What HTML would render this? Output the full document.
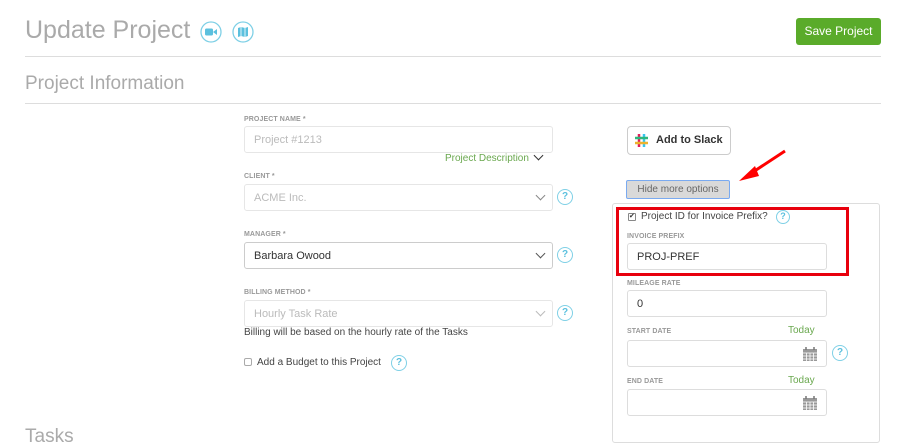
<!DOCTYPE html>
<html><head><style>
*{box-sizing:border-box;margin:0;padding:0}
body{width:920px;height:432px;background:#fff;font-family:"Liberation Sans",sans-serif;position:relative;overflow:hidden;color:#555}
.a{position:absolute}
.lbl{position:absolute;font-size:7px;font-weight:bold;color:#999;letter-spacing:.1px}
.in{position:absolute;border:1px solid #e6e6e6;border-radius:3px;background:#fff;font-size:11px;padding-left:9px;display:flex;align-items:center;color:#bbb}
.dk{border-color:#ccc;color:#333}
.q{position:absolute;width:16px;height:16px;border:1.5px solid #7fd0e6;border-radius:50%;color:#5bc0de;font-size:10px;font-weight:bold;text-align:center;line-height:13px}
.chev{position:absolute;right:8px;top:7px;width:7px;height:7px;border-right:1.5px solid #888;border-bottom:1.5px solid #888;transform:rotate(45deg)}
.green{color:#6aa84f;font-size:10px}
.cal{position:absolute;right:8px;top:5px}
</style></head><body>
<div class="a" style="left:25px;top:16px;font-size:25px;color:#aaa">Update Project</div>
<svg class="a" style="left:200px;top:21px" width="22" height="22"><circle cx="11" cy="11" r="10" fill="none" stroke="#7fd0e6" stroke-width="1.3"/><rect x="5" y="7.5" width="8" height="7" rx="1.5" fill="#5bc0de"/><path d="M13 11 L17 8 V14Z" fill="#5bc0de"/></svg>
<svg class="a" style="left:232px;top:21px" width="22" height="22"><circle cx="11" cy="11" r="10" fill="none" stroke="#7fd0e6" stroke-width="1.3"/><path d="M6 7 L9 6 L13 7 L16 6 V15 L13 16 L9 15 L6 16Z" fill="#5bc0de"/><path d="M9 6V15M13 7V16" stroke="#fff" stroke-width="0.8"/></svg>
<div class="a" style="left:796px;top:18px;width:85px;height:27px;background:#5aab2a;border-radius:3px;color:#fff;font-size:12px;text-align:center;line-height:27px">Save Project</div>
<div class="a" style="left:25px;top:56px;width:856px;height:1px;background:#ddd"></div>
<div class="a" style="left:25px;top:73px;font-size:19px;color:#aaa">Project Information</div>
<div class="a" style="left:25px;top:103px;width:856px;height:1px;background:#ddd"></div>

<div class="lbl" style="left:244px;top:116px">PROJECT NAME *</div>
<div class="in" style="left:244px;top:126px;width:309px;height:27px">Project #1213</div>
<div class="a green" style="left:445px;top:153px">Project Description</div>
<div class="chev" style="left:535px;top:152px;right:auto;border-color:#333"></div>

<div class="lbl" style="left:244px;top:173px">CLIENT *</div>
<div class="in" style="left:244px;top:184px;width:309px;height:27px">ACME Inc.<div class="chev"></div></div>
<div class="q" style="left:557px;top:189px">?</div>

<div class="lbl" style="left:244px;top:231px">MANAGER *</div>
<div class="in dk" style="left:244px;top:242px;width:309px;height:27px">Barbara Owood<div class="chev" style="border-color:#555"></div></div>
<div class="q" style="left:557px;top:247px">?</div>

<div class="lbl" style="left:244px;top:289px">BILLING METHOD *</div>
<div class="in" style="left:244px;top:300px;width:309px;height:27px">Hourly Task Rate<div class="chev" style="border-color:#bbb"></div></div>
<div class="q" style="left:557px;top:305px">?</div>
<div class="a" style="left:244px;top:327px;font-size:10px;color:#444">Billing will be based on the hourly rate of the Tasks</div>
<div class="a" style="left:244px;top:358px;width:8px;height:8px;border:1px solid #aaa;border-radius:2px"></div>
<div class="a" style="left:257px;top:357px;font-size:10px;color:#444">Add a Budget to this Project</div>
<div class="q" style="left:391px;top:355px">?</div>

<div class="a" style="left:627px;top:126px;width:104px;height:29px;border:1px solid #ccc;border-radius:4px;font-size:11px;font-weight:bold;color:#333;line-height:27px;padding-left:28px">Add to Slack</div>
<svg class="a" style="left:634px;top:133px" width="15" height="15"><path d="M5 1V14" stroke="#e01e5a" stroke-width="2.5"/><path d="M10 1V14" stroke="#36c5f0" stroke-width="2.5"/><path d="M1 5H14" stroke="#2eb67d" stroke-width="2.5"/><path d="M1 10H14" stroke="#ecb22e" stroke-width="2.5"/></svg>

<svg class="a" style="left:735px;top:146px" width="55" height="40"><path d="M50 5 L12 30" stroke="#f00" stroke-width="3"/><path d="M4 35 L20 20 L24 30Z" fill="#f00"/></svg>
<div class="a" style="left:626px;top:180px;width:104px;height:19px;background:#d9d9d9;border:1px solid #7aaaf0;border-radius:2px;font-size:10px;color:#666;text-align:center;line-height:17px">Hide more options</div>

<div class="a" style="left:612px;top:203px;width:268px;height:240px;border:1px solid #ddd;border-radius:3px"></div>
<div class="a" style="left:616px;top:207px;width:233px;height:69px;border:3px solid #e8000d"></div>
<div class="a" style="left:628px;top:213px;width:8px;height:8px;border:1px solid #888;border-radius:1px;font-size:7px;line-height:6px;color:#333">✔</div>
<div class="a" style="left:641px;top:211px;font-size:10px;color:#444">Project ID for Invoice Prefix?</div>
<div class="q" style="left:776px;top:210px;width:14px;height:14px;line-height:11px;font-size:9px">?</div>
<div class="lbl" style="left:627px;top:233px">INVOICE PREFIX</div>
<div class="in dk" style="left:627px;top:243px;width:200px;height:27px;border-color:#ddd">PROJ-PREF</div>
<div class="lbl" style="left:627px;top:280px">MILEAGE RATE</div>
<div class="in dk" style="left:627px;top:290px;width:200px;height:27px;border-color:#ddd">0</div>
<div class="lbl" style="left:627px;top:328px">START DATE</div>
<div class="a green" style="left:788px;top:325px">Today</div>
<div class="in" style="left:627px;top:340px;width:200px;height:27px;border-color:#ddd"><svg class="cal" width="16" height="16"><rect x="1" y="3" width="14" height="12" fill="#999"/><path d="M1 7H15M1 10H15M1 13H15M4.5 7V15M8 7V15M11.5 7V15" stroke="#fff" stroke-width=".8"/><path d="M4 1V4M12 1V4" stroke="#777" stroke-width="1.5"/></svg></div>
<div class="q" style="left:832px;top:345px">?</div>
<div class="lbl" style="left:627px;top:378px">END DATE</div>
<div class="a green" style="left:788px;top:375px">Today</div>
<div class="in" style="left:627px;top:389px;width:200px;height:27px;border-color:#ddd"><svg class="cal" width="16" height="16"><rect x="1" y="3" width="14" height="12" fill="#999"/><path d="M1 7H15M1 10H15M1 13H15M4.5 7V15M8 7V15M11.5 7V15" stroke="#fff" stroke-width=".8"/><path d="M4 1V4M12 1V4" stroke="#777" stroke-width="1.5"/></svg></div>
<div class="a" style="left:25px;top:426px;font-size:19px;color:#aaa">Tasks</div>
</body></html>
